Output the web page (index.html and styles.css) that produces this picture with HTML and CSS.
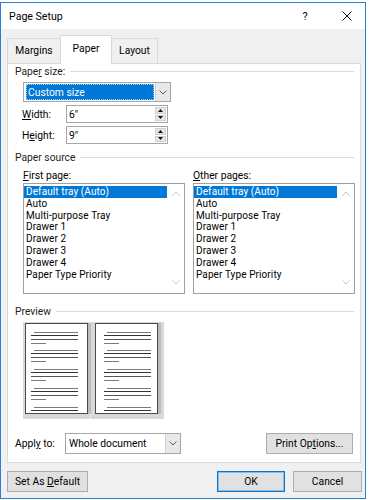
FILE: index.html
```html
<!DOCTYPE html>
<html lang="en">
<head>
  <meta charset="UTF-8" />
  <title>Page Setup</title>
  <link rel="stylesheet" href="styles.css">
</head>
<body>

<div class="window">
  <div class="titlebar">
    <span class="title">Page Setup</span>
    <span class="help">?</span>
    <span class="close">
      <svg width="10" height="10" viewBox="0 0 10 10"><path d="M0.5 0.5L9.5 9.5M9.5 0.5L0.5 9.5" stroke="#111" stroke-width="1" fill="none"/></svg>
    </span>
  </div>

  <div class="client">
    <!-- Tabs -->
    <div class="tabs">
      <div class="tab tab-margins">Margins</div>
      <div class="tab tab-paper active">Paper</div>
      <div class="tab tab-layout">Layout</div>
    </div>

    <div class="panel">
      <div class="group-head"><span>Pape<u>r</u> size:</span></div>
      <div class="combo size-combo">
        <div class="combo-value selected"><span>Custom size</span></div>
        <div class="combo-btn">
          <svg width="8" height="5" viewBox="0 0 8 5"><path d="M0.5 0.5L4 4L7.5 0.5" stroke="#606060" fill="none"/></svg>
        </div>
      </div>

      <div class="field-row">
        <label><u>W</u>idth:</label>
        <div class="spin">
          <span class="spin-value">6"</span>
          <div class="spin-btns">
            <div class="spin-btn"><svg width="5" height="3" viewBox="0 0 5 3"><path d="M2.5 0L5 3H0Z" fill="#111"/></svg></div>
            <div class="spin-btn"><svg width="5" height="3" viewBox="0 0 5 3"><path d="M0 0H5L2.5 3Z" fill="#111"/></svg></div>
          </div>
        </div>
      </div>
      <div class="field-row">
        <label>H<u>e</u>ight:</label>
        <div class="spin">
          <span class="spin-value">9"</span>
          <div class="spin-btns">
            <div class="spin-btn"><svg width="5" height="3" viewBox="0 0 5 3"><path d="M2.5 0L5 3H0Z" fill="#111"/></svg></div>
            <div class="spin-btn"><svg width="5" height="3" viewBox="0 0 5 3"><path d="M0 0H5L2.5 3Z" fill="#111"/></svg></div>
          </div>
        </div>
      </div>

      <div class="group-head gap-source"><span>Paper source</span></div>
      <div class="sources">
        <div class="source">
          <div class="list-label"><u>F</u>irst page:</div>
          <div class="listbox">
            <ul class="items">
              <li class="selected">Default tray (Auto)</li>
              <li>Auto</li>
              <li>Multi-purpose Tray</li>
              <li>Drawer 1</li>
              <li>Drawer 2</li>
              <li>Drawer 3</li>
              <li>Drawer 4</li>
              <li>Paper Type Priority</li>
            </ul>
            <div class="scroll">
              <svg width="8" height="5" viewBox="0 0 8 5"><path d="M0.5 4.5L4 1L7.5 4.5" stroke="#c4c4c4" fill="none"/></svg>
              <svg width="8" height="5" viewBox="0 0 8 5"><path d="M0.5 0.5L4 4L7.5 0.5" stroke="#c4c4c4" fill="none"/></svg>
            </div>
          </div>
        </div>
        <div class="source">
          <div class="list-label"><u>O</u>ther pages:</div>
          <div class="listbox">
            <ul class="items">
              <li class="selected">Default tray (Auto)</li>
              <li>Auto</li>
              <li>Multi-purpose Tray</li>
              <li>Drawer 1</li>
              <li>Drawer 2</li>
              <li>Drawer 3</li>
              <li>Drawer 4</li>
              <li>Paper Type Priority</li>
            </ul>
            <div class="scroll">
              <svg width="8" height="5" viewBox="0 0 8 5"><path d="M0.5 4.5L4 1L7.5 4.5" stroke="#c4c4c4" fill="none"/></svg>
              <svg width="8" height="5" viewBox="0 0 8 5"><path d="M0.5 0.5L4 4L7.5 0.5" stroke="#c4c4c4" fill="none"/></svg>
            </div>
          </div>
        </div>
      </div>

      <div class="group-head gap-preview"><span>Preview</span></div>
      <div class="preview">
        <div class="sheet-cell first">
          <div class="sheet">
            <svg width="61" height="89" viewBox="0 0 61 89">
              <defs>
                <g id="para">
                  <rect x="8" y="8" width="44" height="1" fill="#7a7a7a"/>
                  <rect x="5" y="11" width="47" height="1" fill="#333"/>
                  <rect x="5" y="15" width="47" height="1" fill="#555"/>
                  <rect x="5" y="19" width="15" height="1" fill="#7a7a7a"/>
                </g>
              </defs>
              <use href="#para" y="0"/>
              <use href="#para" y="18"/>
              <use href="#para" y="37"/>
              <use href="#para" y="56"/>
              <use href="#para" y="75"/>
            </svg>
          </div>
        </div>
        <div class="sheet-cell second">
          <div class="sheet">
            <svg width="61" height="89" viewBox="0 0 61 89">
              <use href="#para" x="3" y="0"/>
              <use href="#para" x="3" y="18"/>
              <use href="#para" x="3" y="37"/>
              <use href="#para" x="3" y="56"/>
              <use href="#para" x="3" y="75"/>
            </svg>
          </div>
        </div>
      </div>

      <div class="apply-row">
        <label>Appl<u>y</u> to:</label>
        <div class="combo apply-combo">
          <div class="combo-value"><span>Whole document</span></div>
          <div class="combo-btn">
            <svg width="8" height="5" viewBox="0 0 8 5"><path d="M0.5 0.5L4 4L7.5 0.5" stroke="#606060" fill="none"/></svg>
          </div>
        </div>
        <button class="button print-btn">Print Op<u>t</u>ions...</button>
      </div>
    </div>

    <div class="footer">
      <button class="button default-btn">Set As <u>D</u>efault</button>
      <button class="button ok-btn">OK</button>
      <button class="button cancel-btn">Cancel</button>
    </div>
  </div>
</div>

</body>
</html>
```

FILE: styles.css
```css
* {
  box-sizing: border-box;
}
body {
  margin: 0;
  background: #fff;
  font-family: Roboto, "Noto Sans", sans-serif;
  font-size: 10.3px;
  color: #000;
}
u {
  text-decoration-thickness: 1px;
  text-underline-offset: 1px;
}
.window {
  width: 366px;
  height: 497px;
  margin-top: 2px;
  border: 1px solid #2b7fd2;
  display: flex;
  flex-direction: column;
  background: #f0f0f0;
}
.titlebar {
  height: 26px;
  flex-shrink: 0;
  background: #fff;
  display: flex;
  align-items: center;
  padding: 0 6px 0 8px;
}
.title {
  flex: 1;
  font-size: 10.6px;
}
.help {
  width: 12px;
  text-align: center;
  font-size: 11px;
  margin-right: 24px;
}
.close {
  width: 24px;
  display: flex;
  justify-content: center;
}
.client {
  flex: 1;
  padding: 6px 3px 0 6px;
}

/* Tabs */
.tabs {
  display: flex;
  align-items: flex-end;
  height: 28px;
}
.tab {
  height: 25px;
  border: 1px solid #d9d9d9;
  border-bottom: none;
  background: #f0f0f0;
  display: flex;
  align-items: center;
  justify-content: center;
  padding-bottom: 1px;
}
.tab-margins {
  width: 54px;
}
.tab-paper {
  width: 52px;
  margin-left: -1px;
}
.tab-layout {
  width: 47px;
  margin-left: -1px;
}
.tab.active {
  height: 29px;
  margin-bottom: -1px;
  background: #fff;
  position: relative;
  z-index: 1;
  padding-bottom: 3px;
}

/* Panel */
.panel {
  width: 354px;
  height: 400px;
  background: #fff;
  border: 1px solid #d9d9d9;
}
.group-head {
  display: flex;
  align-items: center;
  height: 12px;
  margin-top: 1px;
  padding: 0 6px 0 7px;
  color: #1e1e1e;
}
.group-head::after {
  content: "";
  flex: 1;
  height: 1px;
  background: #dcdcdc;
  margin-left: 5px;
}
.gap-source {
  margin-top: 7px;
}
.gap-preview {
  margin-top: 11px;
}

/* Combo boxes */
.combo {
  display: flex;
  height: 20px;
  border: 1px solid #a6a6a6;
  background: #fff;
}
.size-combo {
  width: 148px;
  margin: 5px 0 0 15px;
}
.combo-value {
  flex: 1;
  display: flex;
  align-items: center;
  margin: 1px 1px 1px 2px;
  padding-left: 2px;
}
.combo-value.selected {
  background: #0078d7;
  color: #fff;
  outline: 1px dotted #9ccaf0;
  outline-offset: -1px;
}
.combo-btn {
  width: 15px;
  background: #e8e8e8;
  border-left: 1px solid #d2d2d2;
  display: flex;
  align-items: center;
  justify-content: center;
}

/* Width / height spinners */
.field-row {
  display: flex;
  align-items: center;
  height: 18px;
  margin: 3px 0 0 14px;
}
.field-row label {
  width: 44px;
}
.spin {
  width: 102px;
  height: 18px;
  border: 1px solid #a6a6a6;
  display: flex;
  align-items: center;
}
.spin-value {
  flex: 1;
  padding-left: 2px;
}
.spin-btns {
  width: 12px;
  height: 100%;
  display: flex;
  flex-direction: column;
  gap: 1px;
  padding: 1px 1px 1px 0;
}
.spin-btn {
  flex: 1;
  background: #e6e6e6;
  border: 1px solid #cfcfcf;
  display: flex;
  align-items: center;
  justify-content: center;
}

/* Paper source lists */
.sources {
  display: flex;
  gap: 8px;
  margin: 7px 0 0 15px;
}
.list-label {
  height: 12px;
  line-height: 12px;
  margin-bottom: 1px;
}
.listbox {
  width: 162px;
  height: 111px;
  border: 1px solid #a0a0a0;
  display: flex;
}
.items {
  list-style: none;
  margin: 0;
  padding: 2px 0 0 0;
  width: 143px;
}
.items li {
  height: 11.8px;
  line-height: 11.8px;
  font-size: 10px;
  letter-spacing: 0.1px;
  padding-left: 2px;
  white-space: nowrap;
}
.items li.selected {
  background: #0078d7;
  color: #fff;
}
.scroll {
  flex: 1;
  display: flex;
  flex-direction: column;
  align-items: center;
  justify-content: space-between;
  padding: 7px 0 8px;
}

/* Preview */
.preview {
  display: flex;
  width: 141px;
  height: 97px;
  margin: 5px 0 0 15px;
  background: #d8d8d8;
}
.sheet-cell {
  padding-top: 1px;
}
.sheet-cell.first {
  width: 68px;
  padding-left: 2px;
  border-right: 1px solid #ececec;
}
.sheet-cell.second {
  flex: 1;
  padding-left: 4px;
}
.sheet {
  width: 63px;
  height: 91px;
  background: #fff;
  border: 1px solid #4a4a4a;
  box-shadow: 3px 0 0 #bcbcbc;
}
.sheet svg {
  display: block;
}

/* Apply row */
.apply-row {
  display: flex;
  align-items: center;
  height: 21px;
  margin-top: 14px;
  padding: 0 7px;
}
.apply-row label {
  width: 50px;
}
.apply-combo {
  width: 116px;
  height: 21px;
}
.apply-combo .combo-value {
  padding-left: 1px;
}

/* Buttons */
.button {
  height: 21px;
  font: inherit;
  color: #000;
  background: #e1e1e1;
  border: 1px solid #adadad;
  padding: 0;
}
.print-btn {
  width: 87px;
  margin-left: auto;
}
.footer {
  display: flex;
  margin-top: 8px;
}
.default-btn {
  width: 81px;
}
.ok-btn {
  width: 68px;
  margin-left: auto;
  border: 1px solid #0078d7;
  box-shadow: inset 0 0 0 1px rgba(0, 120, 215, 0.35);
}
.cancel-btn {
  width: 69px;
  margin-left: 8px;
}
```
